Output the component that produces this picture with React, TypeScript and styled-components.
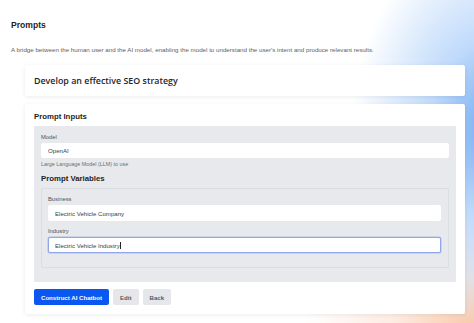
import React from 'react';
import styled, { createGlobalStyle, css } from 'styled-components';

const GlobalStyle = createGlobalStyle`
  html, body {
    margin: 0;
    padding: 0;
  }
  body {
    font-family: 'Liberation Sans', Arial, sans-serif;
    color: #1f2328;
    min-height: 323px;
    background:
      radial-gradient(ellipse 140px 200px at 104% 40%, rgba(112, 170, 242, 1) 0%, rgba(150, 194, 248, 0.6) 45%, rgba(255, 255, 255, 0) 100%),
      radial-gradient(ellipse 180px 120px at 102% 104%, rgba(248, 190, 150, 0.95) 0%, rgba(250, 215, 195, 0.5) 50%, rgba(255, 255, 255, 0) 100%),
      #ffffff;
  }
`;

const Page = styled.div`
  padding: 19px 9px 8px 11px;
  box-sizing: border-box;
  width: 474px;
  height: 323px;
`;

const PageTitle = styled.h1`
  margin: 0;
  font-size: 8.6px;
  line-height: 12px;
  font-weight: 700;
  color: #1c1f24;
`;

const PageDescription = styled.p`
  margin: 15px 0 0;
  font-size: 6.2px;
  line-height: 8px;
  color: #5c6168;
  white-space: nowrap;
`;

const Content = styled.div`
  margin: 11px 0 0 14px;
  width: 440px;
  display: flex;
  flex-direction: column;
  gap: 8px;
`;

const Card = styled.section`
  background: #ffffff;
  border-radius: 2px;
  box-shadow: 0 1px 4px rgba(0, 0, 0, 0.08);
  padding: 7px 9px 9px;
  box-sizing: border-box;
`;

const HeaderCard = styled(Card)`
  height: 31px;
  display: flex;
  align-items: center;
  padding: 0 9px;
`;

const StrategyTitle = styled.h2`
  margin: 0;
  font-family: 'Open Sans', 'Noto Sans', sans-serif;
  font-weight: 600;
  font-size: 8.9px;
  color: #23262b;
`;

const SectionTitle = styled.h3`
  margin: 0;
  font-size: 7.8px;
  line-height: 12px;
  font-weight: 700;
  color: #1c1f24;
`;

const Panel = styled.div<{ $inner?: boolean }>`
  background: #e8e9ec;
  display: flex;
  flex-direction: column;
  ${({ $inner }) =>
    $inner
      ? css`
          border: 1px solid #dcdde1;
          border-radius: 2px;
          padding: 6px 7px 14px 6px;
          margin-top: 3px;
        `
      : css`
          border-radius: 1px;
          margin-top: 3px;
          padding: 7px 7px 14px 7px;
        `}
`;

const Field = styled.div<{ $spaced?: boolean }>`
  display: flex;
  flex-direction: column;
  margin-top: ${({ $spaced }) => ($spaced ? 6 : 0)}px;
`;

const Label = styled.label`
  font-size: 5.8px;
  line-height: 8px;
  color: #4d5259;
`;

const Input = styled.div<{ $focused?: boolean; $height?: number }>`
  margin-top: 2px;
  height: ${({ $height }) => $height || 16}px;
  box-sizing: border-box;
  background: #ffffff;
  border-radius: 2px;
  display: flex;
  align-items: center;
  padding: 0 6px;
  font-size: 6.1px;
  color: #3c4047;
  border: 1px solid ${({ $focused }) => ($focused ? '#8fa6e8' : '#ffffff')};
  ${({ $focused }) =>
    $focused &&
    css`
      box-shadow: 0 0 0 0.5px rgba(120, 150, 230, 0.5);
    `}
`;

const Caret = styled.span`
  display: inline-block;
  width: 0.6px;
  height: 7px;
  background: #222;
  margin-left: 0.5px;
`;

const Helper = styled.div`
  margin-top: 3px;
  font-size: 5.4px;
  line-height: 6px;
  color: #6a6f76;
`;

const VariablesTitle = styled(SectionTitle)`
  margin-top: 6px;
`;

const Actions = styled.div`
  display: flex;
  gap: 4px;
  margin-top: 7px;
`;

const Button = styled.button<{ $primary?: boolean }>`
  height: 16px;
  border: none;
  border-radius: 2px;
  padding: 0 7px;
  font-family: 'Liberation Sans', Arial, sans-serif;
  font-size: 6.1px;
  font-weight: 700;
  cursor: pointer;
  background: ${({ $primary }) => ($primary ? '#0b57f2' : '#e6e7ea')};
  color: ${({ $primary }) => ($primary ? '#ffffff' : '#555a61')};
`;

export default function App() {
  return (
    <>
      <GlobalStyle />
      <Page>
        <PageTitle>Prompts</PageTitle>
        <PageDescription>
          A bridge between the human user and the AI model, enabling the model to understand the
          user's intent and produce relevant results.
        </PageDescription>
        <Content>
          <HeaderCard>
            <StrategyTitle>Develop an effective SEO strategy</StrategyTitle>
          </HeaderCard>
          <Card>
            <SectionTitle>Prompt Inputs</SectionTitle>
            <Panel>
              <Field>
                <Label>Model</Label>
                <Input $height={15}>OpenAI</Input>
                <Helper>Large Language Model (LLM) to use</Helper>
              </Field>
              <VariablesTitle>Prompt Variables</VariablesTitle>
              <Panel $inner>
                <Field>
                  <Label>Business</Label>
                  <Input>Electric Vehicle Company</Input>
                </Field>
                <Field $spaced>
                  <Label>Industry</Label>
                  <Input $focused>
                    Electric Vehicle Industry
                    <Caret />
                  </Input>
                </Field>
              </Panel>
            </Panel>
            <Actions>
              <Button $primary>Construct AI Chatbot</Button>
              <Button>Edit</Button>
              <Button>Back</Button>
            </Actions>
          </Card>
        </Content>
      </Page>
    </>
  );
}
